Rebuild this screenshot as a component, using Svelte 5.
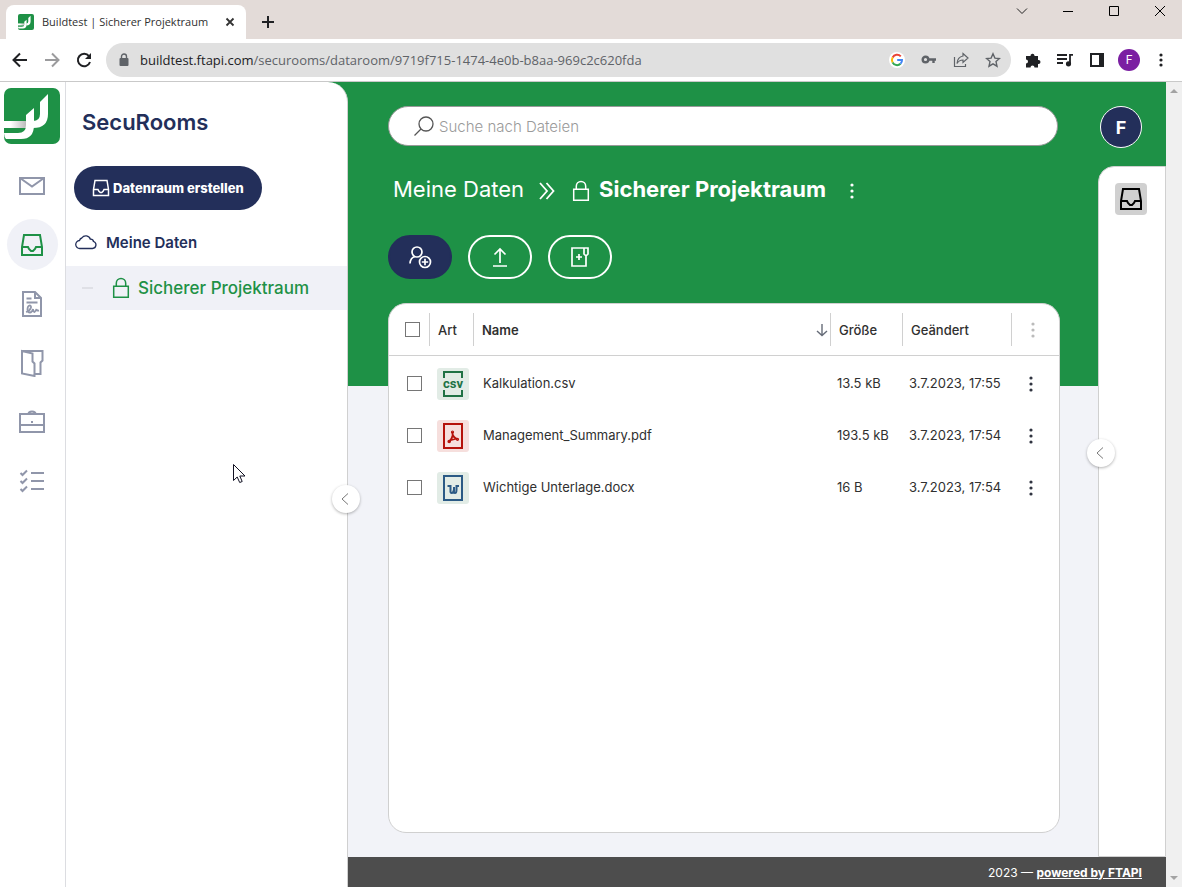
<script lang="ts">
	interface FileRow {
		name: string;
		type: 'csv' | 'pdf' | 'docx';
		size: string;
		changed: string;
	}

	const files: FileRow[] = [
		{ name: 'Kalkulation.csv', type: 'csv', size: '13.5 kB', changed: '3.7.2023, 17:55' },
		{ name: 'Management_Summary.pdf', type: 'pdf', size: '193.5 kB', changed: '3.7.2023, 17:54' },
		{ name: 'Wichtige Unterlage.docx', type: 'docx', size: '16 B', changed: '3.7.2023, 17:54' }
	];

	let search = $state('');
	let selected: string[] = $state([]);
	let allSelected = $derived(selected.length === files.length);

	function toggleAll() {
		selected = allSelected ? [] : files.map((f) => f.name);
	}
</script>

{#snippet tray(size: number)}
	<svg width={size} height={size} viewBox="0 0 24 24" fill="none" stroke="currentColor" stroke-width="2">
		<path d="M4 2h16l2 12v8H2v-8z" />
		<path d="M2 14h6l1 2 2 2h2l2-2 1-2h6" />
	</svg>
{/snippet}

{#snippet lock(size: number)}
	<svg width={size} height={size} viewBox="0 0 22 22" fill="none" stroke="currentColor" stroke-width="1.5">
		<path d="M3.700 9.200h14.600v11.100H3.700z" />
		<path d="M6.300 9V6.200a4.700 4.700 0 0 1 9.400 0V9" />
	</svg>
{/snippet}

{#snippet dots()}
	<svg width="6" height="18" viewBox="0 0 6 18" fill="currentColor">
		<circle cx="3" cy="3" r="1.600" />
		<circle cx="3" cy="9" r="1.600" />
		<circle cx="3" cy="15" r="1.600" />
	</svg>
{/snippet}

{#snippet chevron()}
	<svg width="12" height="12" viewBox="0 0 12 12" fill="none" stroke="currentColor">
		<path d="M9 .5L3 6l6 5.500" />
	</svg>
{/snippet}

{#snippet logo(size: number)}
	<svg width={size} height={size} viewBox="0 0 56 56">
		<defs>
			<linearGradient id="fold">
				<stop offset="0.3" stop-color="#fff" />
				<stop offset="1" stop-color="#bbb" />
			</linearGradient>
		</defs>
		<rect width="56" height="56" rx="7" fill="#1e9146" />
		<path d="M0 33h22v7H0z" fill="url(#fold)" />
		<path d="M29 33q7 0 7-7V14l8-8v20q0 14-15 14z" fill="#fff" />
		<path d="M0 45h14q8 0 8-8V27l8-7v17q0 14-13 14H2q-2-2-2-6z" fill="#fff" />
	</svg>
{/snippet}

<div class="window">
	<header class="tabstrip">
		<div class="tab">
			{@render logo(16)}
			<span class="tab-title">Buildtest | Sicherer Projektraum</span>
			<button class="plain" aria-label="Tab schließen">
				<svg width="10" height="10" viewBox="0 0 10 10" stroke="#333" stroke-width="1.800">
					<path d="M1.500 1.500l7 7M8.500 1.500l-7 7" />
				</svg>
			</button>
		</div>
		<button class="plain new-tab" aria-label="Neuer Tab">
			<svg width="12" height="12" viewBox="0 0 12 12" stroke="#202124" stroke-width="2">
				<path d="M6 0v12M0 6h12" />
			</svg>
		</button>
		<div class="window-buttons">
			<button class="plain" aria-label="Tabs durchsuchen">
				<svg width="12" height="12" viewBox="0 0 12 12" fill="none" stroke="#222"><path d="M1 3.500l5 5 5-5" /></svg>
			</button>
			<button class="plain" aria-label="Minimieren">
				<svg width="12" height="12" viewBox="0 0 12 12" stroke="#000"><path d="M1 6.500h10" /></svg>
			</button>
			<button class="plain" aria-label="Maximieren">
				<svg width="12" height="12" viewBox="0 0 12 12" fill="none" stroke="#000"><path d="M1.500 1.500h9v9h-9z" /></svg>
			</button>
			<button class="plain" aria-label="Schließen">
				<svg width="12" height="12" viewBox="0 0 12 12" stroke="#000"><path d="M1 1l10 10M11 1L1 11" /></svg>
			</button>
		</div>
	</header>

	<div class="toolbar">
		<button class="plain" aria-label="Zurück">
			<svg width="16" height="16" viewBox="0 0 16 16" fill="none" stroke="#202124" stroke-width="2"><path d="M15 8H2M8 1.500L1.500 8 8 14.500" /></svg>
		</button>
		<button class="plain" aria-label="Vor">
			<svg width="16" height="16" viewBox="0 0 16 16" fill="none" stroke="#9b9b9d" stroke-width="2"><path d="M1 8h13M8 1.500L14.500 8 8 14.500" /></svg>
		</button>
		<button class="plain" aria-label="Neu laden">
			<svg width="16" height="16" viewBox="0 0 16 16" fill="none" stroke="#202124" stroke-width="2">
				<path d="M13 4.200A6.200 6.200 0 1 0 14 10" />
				<path d="M15 1v6H9z" fill="#202124" stroke="none" />
			</svg>
		</button>
		<div class="omnibox">
			<svg width="10" height="14" viewBox="0 0 10 14">
				<rect x="0.500" y="5" width="9" height="8" rx="1" fill="#5f6368" />
				<path d="M2.500 5.500V3.500a2.500 2.500 0 0 1 5 0v2" fill="none" stroke="#5f6368" stroke-width="1.400" />
			</svg>
			<div class="url"><span>buildtest.ftapi.com</span>/securooms/dataroom/9719f715-1474-4e0b-b8aa-969c2c620fda</div>
			<svg width="16" height="16" viewBox="0 0 16 16" fill="none" stroke-width="2">
				<circle cx="8" cy="8" r="8" fill="#fff" />
				<path d="M3.600 5.500A5 5 0 0 1 11.800 4.300" stroke="#ea4335" />
				<path d="M3.600 5.500a5 5 0 0 0 0 5" stroke="#fbbc05" />
				<path d="M3.600 10.500a5 5 0 0 0 7.900 1.200" stroke="#34a853" />
				<path d="M11.500 11.700Q13.100 10.200 13 8.100H8.200" stroke="#4285f4" />
			</svg>
			<svg width="16" height="16" viewBox="0 0 16 16" fill="none" stroke="#5f6368" stroke-width="2.400">
				<circle cx="4.500" cy="7.500" r="2.800" />
				<path d="M7.500 7.500H15M12.500 7.500V11" />
			</svg>
			<svg width="16" height="16" viewBox="0 0 16 16" fill="none" stroke="#5f6368" stroke-width="1.200">
				<path d="M1.500 5v9.500h11V12" />
				<path d="M10 1.500L15 6l-5 4.500V8Q6 8 4 11.500 4.500 5 10 4z" />
			</svg>
			<svg width="16" height="16" viewBox="0 0 16 16" fill="none" stroke="#5f6368" stroke-width="1.400">
				<path d="M8 1.800l1.900 4.300 4.600.4-3.500 3.100 1 4.600-4-2.400-4 2.400 1-4.600-3.500-3.100 4.600-.4z" />
			</svg>
		</div>
		<div class="extensions">
			<svg width="16" height="16" viewBox="0 0 16 16" fill="#202124">
				<path d="M1 4h4.500a2 2 0 0 1 4-.5V4H13v4h.5a2 2 0 0 1 0 4H13v3.500H9.500a2 2 0 0 0-4 0H1v-4a2 2 0 0 0 0-4z" />
			</svg>
			<svg width="16" height="16" viewBox="0 0 16 16" fill="none" stroke="#202124" stroke-width="1.800">
				<path d="M0 3h10M0 7h10M0 11h6M13 12V2.900h3" />
				<circle cx="11.500" cy="11.800" r="1.700" fill="#202124" />
			</svg>
			<svg width="14" height="14" viewBox="0 0 14 14" fill="none" stroke="#202124" stroke-width="2">
				<path d="M1 1h12v12H1z" />
				<path d="M10 1h3v12h-3z" fill="#202124" />
			</svg>
			<span class="profile">F</span>
			<svg width="4" height="14" viewBox="0 0 4 14" fill="#202124">
				<circle cx="2" cy="2" r="1.600" /><circle cx="2" cy="7" r="1.600" /><circle cx="2" cy="12" r="1.600" />
			</svg>
		</div>
	</div>

	<div class="page">
		<nav class="rail">
			<a class="brand" href="#start" aria-label="FTAPI">{@render logo(56)}</a>
			<a class="rail-item" href="#mails" aria-label="SecuMails">
				<svg width="28" height="28" viewBox="0 0 28 28" fill="none" stroke="currentColor" stroke-width="2">
					<path d="M2 6h24v16H2z" /><path d="M2 6l12 8.500L26 6" />
				</svg>
			</a>
			<a class="rail-item active" href="#rooms" aria-label="SecuRooms">{@render tray(24)}</a>
			<a class="rail-item" href="#forms" aria-label="SecuForms">
				<svg width="28" height="28" viewBox="0 0 28 28" fill="none" stroke="currentColor" stroke-width="2">
					<path d="M17 2H5v24h18V8z" /><path d="M17 2v6h6" />
					<path d="M8.500 8.500h5M8.500 12.500h11" stroke-width="1.800" />
					<path d="M8 22q4-1 5-4.500.2-2-1.500-2-2 .5-2 4 0 3 2.500 3 2 0 3-3.500.2 3 1.500 3 1.500-1 2-3 .2 2 2.500 1.500" stroke-width="1.800" />
				</svg>
			</a>
			<a class="rail-item" href="#folders" aria-label="Ordner">
				<svg width="28" height="28" viewBox="0 0 28 28" fill="none" stroke="currentColor" stroke-width="2">
					<path d="M4 2h20.500v9.500l-2 2V25H17" />
					<path d="M4 2v22.500L16.500 27V14.500l-2-2V4.500z" />
				</svg>
			</a>
			<a class="rail-item" href="#cases" aria-label="Vorgänge">
				<svg width="28" height="28" viewBox="0 0 28 28" fill="none" stroke="currentColor" stroke-width="2">
					<path d="M2 6h24v18H2zM2 17h24" /><path d="M10.500 6q0-2.500 3.500-2.500t3.500 2.500" />
					<path d="M13 14h2" />
				</svg>
			</a>
			<a class="rail-item" href="#tasks" aria-label="Aufgaben">
				<svg width="28" height="28" viewBox="0 0 28 28" fill="none" stroke="currentColor" stroke-width="2">
					<path d="M13 6h13M13 14h13M13 22h13" />
					<path d="M2.500 6l2 2L9 3.500M2.500 14l2 2L9 11.500M2.500 22l2 2L9 19.500" />
				</svg>
			</a>
		</nav>

		<div class="workspace">
			<aside class="sidebar">
				<h1>SecuRooms</h1>
				<button class="create">{@render tray(18)}Datenraum erstellen</button>
				<a class="tree-root" href="#daten">
					<svg width="22" height="16" viewBox="0 0 22 16" fill="none" stroke="currentColor" stroke-width="1.300">
						<path d="M5 14.500a4 4 0 0 1-.5-8Q5 4.500 6.800 4a4.800 4.800 0 0 1 8.600 1.200Q18 5 18.500 7.500a3.600 3.600 0 0 1-1 7z" />
					</svg>
					Meine Daten
				</a>
				<a class="tree-item" href="#projekt">
					<span class="dash"></span>
					{@render lock(22)}
					Sicherer Projektraum
				</a>
				<button class="collapse collapse-left" aria-label="Seitenleiste einklappen">{@render chevron()}</button>
			</aside>

			<div class="main">
				<div class="columns">
					<section class="content">
						<label class="search">
							<svg width="20" height="20" viewBox="0 0 20 20" fill="none" stroke="#555" stroke-width="1.300">
								<circle cx="12" cy="8" r="7" /><path d="M7 13l-6.500 6.500" />
							</svg>
							<input type="text" placeholder="Suche nach Dateien" aria-label="Suche nach Dateien" bind:value={search} />
						</label>

						<div class="breadcrumb">
							<a href="#daten">Meine Daten</a>
							<svg width="16" height="18" viewBox="0 0 16 18" fill="none" stroke="currentColor" stroke-width="1.800">
								<path d="M1 1l7 8-7 8M7.500 1l7 8-7 8" />
							</svg>
							{@render lock(22)}
							<h2>Sicherer Projektraum</h2>
							<button class="plain" aria-label="Weitere Aktionen">{@render dots()}</button>
						</div>

						<div class="actions">
							<button class="pill filled" aria-label="Mitglied hinzufügen">
								<svg width="24" height="24" viewBox="0 0 24 24" fill="none" stroke="currentColor" stroke-width="1.700">
									<circle cx="9" cy="7" r="5" />
									<path d="M2 18.500Q2.500 12.500 7 11.500" />
									<circle cx="17" cy="17" r="5.500" /><path d="M17 13.800v6.400M13.800 17h6.400" />
								</svg>
							</button>
							<button class="pill" aria-label="Hochladen">
								<svg width="20" height="20" viewBox="0 0 20 20" fill="none" stroke="currentColor" stroke-width="1.700">
									<path d="M10 16V2M4.500 7.500L10 2l5.500 5.500M3 19h14" />
								</svg>
							</button>
							<button class="pill" aria-label="Ordner anlegen">
								<svg width="20" height="20" viewBox="0 0 20 20" fill="none" stroke="currentColor" stroke-width="1.700">
									<path d="M14 1H2v18h14V9l-2-2zM14 1h4v6l-2 2" /><path d="M9 7v6M6 10h6" />
								</svg>
							</button>
						</div>

						<div class="card">
							<table>
								<colgroup>
									<col class="c-check" /><col class="c-type" /><col /><col class="c-size" /><col class="c-date" /><col class="c-menu" />
								</colgroup>
								<thead>
									<tr>
										<th><div class="head check"><input type="checkbox" aria-label="Alle auswählen" checked={allSelected} onchange={toggleAll} /></div></th>
										<th><div class="head">Art</div></th>
										<th>
											<div class="head sorted">
												Name
												<svg width="12" height="14" viewBox="0 0 12 14" fill="none" stroke="#666c78" stroke-width="1.400"><path d="M6 1v11.500M1 8l5 4.500L11 8" /></svg>
											</div>
										</th>
										<th><div class="head">Größe</div></th>
										<th><div class="head">Geändert</div></th>
										<th><div class="head last">{@render dots()}</div></th>
									</tr>
								</thead>
								<tbody>
									{#each files as file (file.name)}
										<tr>
											<td class="pick"><input type="checkbox" value={file.name} bind:group={selected} aria-label={file.name} /></td>
											<td class="kind">
												<span class="file-icon {file.type}">
													<svg width="32" height="32" viewBox="0 0 32 32" fill="none" stroke="currentColor" stroke-width="2">
														{#if file.type === 'csv'}
															<path d="M7 10V4h18v6M7 22v6h18v-6" />
															<text x="16" y="20" text-anchor="middle">csv</text>
														{:else if file.type === 'pdf'}
															<path d="M7 4h18v24H7z" />
															<path d="M15.500 12v2Q16 17 20.500 19.500M15.800 15Q15 19 12 22M12.500 20.500L20 18.500" stroke-width="1.800" />
															<circle cx="15.500" cy="12" r=".6" /><circle cx="12.200" cy="21.500" r=".8" /><circle cx="20.500" cy="19.300" r=".6" />
														{:else}
															<path d="M7 4h18v24H7z" />
															<path d="M10.500 14h3v4.500q-.3 2.500 1.200 2.500 1.800 0 2.300-3.500V15v3.500q-.3 2.500 1 2.500 1.500 0 1.500-3.500V14H22" stroke-width="2" />
														{/if}
													</svg>
												</span>
											</td>
											<td class="name">{file.name}</td>
											<td class="meta">{file.size}</td>
											<td class="meta">{file.changed}</td>
											<td class="menu"><button class="plain" aria-label="Aktionen für {file.name}">{@render dots()}</button></td>
										</tr>
									{/each}
								</tbody>
							</table>
						</div>
					</section>

					<div class="side">
						<button class="avatar" aria-label="Profil">F</button>
						<aside class="panel">
							<button class="panel-tab" aria-label="Datenraum-Details">{@render tray(24)}</button>
							<button class="collapse collapse-right" aria-label="Details ausklappen">{@render chevron()}</button>
						</aside>
					</div>
				</div>
				<footer>2023 — <a href="#ftapi">powered by FTAPI</a></footer>
			</div>
		</div>

		<div class="scrollbar">
			<svg width="8" height="4" viewBox="0 0 8 4" fill="#a3a3a3"><path d="M0 4l4-4 4 4z" /></svg>
			<svg width="8" height="4" viewBox="0 0 8 4" fill="#a3a3a3"><path d="M0 0l4 4 4-4z" /></svg>
		</div>
	</div>

	<svg class="cursor" width="13" height="20" viewBox="0 0 13 20" fill="#fff" stroke="#111122">
		<path d="M.5.5v16l3.700-3.500 2.500 5.500 2.500-1-2.400-5.500h5.200z" />
	</svg>
</div>

<style>
	:global(body) {
		margin: 0;
	}

	.window {
		--green: #1e9146;
		--navy: #232f5a;
		--line: #d0d0d0;
		display: flex;
		flex-direction: column;
		position: relative;
		height: 100vh;
		overflow: hidden;
		background: #fff;
		font-family: Inter, 'Liberation Sans', sans-serif;
		color: #303030;
	}

	.window :global(*) {
		box-sizing: border-box;
	}

	svg {
		display: block;
		flex: none;
	}

	button {
		font-family: inherit;
		cursor: pointer;
	}

	a {
		color: inherit;
		text-decoration: none;
	}

	.plain {
		display: flex;
		padding: 0;
		border: 0;
		background: none;
		color: inherit;
	}

	/* browser frame */
	.tabstrip {
		display: flex;
		align-items: flex-end;
		flex: none;
		height: 39px;
		padding-left: 6px;
		background: #e3dbd8;
	}

	.tab {
		display: flex;
		align-items: center;
		gap: 8px;
		width: 240px;
		height: 34px;
		padding: 0 11px 0 12px;
		border-radius: 8px 8px 0 0;
		background: #fff;
	}

	.tab-title {
		flex: 1;
		font: 11px/16px 'Open Sans', sans-serif;
		white-space: nowrap;
	}

	.new-tab {
		margin: 0 0 11px 16px;
	}

	.window-buttons {
		display: flex;
		align-self: flex-start;
		gap: 34px;
		margin-left: auto;
		padding: 5px 16px 0 0;
	}

	.toolbar {
		display: flex;
		align-items: center;
		flex: none;
		gap: 16px;
		height: 43px;
		padding: 0 5px 0 12px;
		border-bottom: 1px solid #c9c9c9;
	}

	.omnibox {
		display: flex;
		align-items: center;
		flex: 1;
		gap: 16px;
		height: 34px;
		margin: 0 -10px 0 -2px;
		padding: 0 10px 0 13px;
		border-radius: 17px;
		background: #e0e0e0;
	}

	.url {
		flex: 1;
		margin-left: -5px;
		font: 13px/20px 'Open Sans', sans-serif;
		color: #5f6368;
		white-space: nowrap;
	}

	.url span {
		color: #202124;
	}

	.extensions {
		display: grid;
		grid-template-columns: repeat(5, 32px);
		place-items: center;
	}

	.profile {
		width: 22px;
		border-radius: 50%;
		background: #7b1fa2;
		color: #fff;
		font: 12px/22px Roboto, sans-serif;
		text-align: center;
	}

	.page {
		display: flex;
		flex: 1;
		min-height: 0;
	}

	/* module rail */
	.rail {
		display: flex;
		flex-direction: column;
		align-items: center;
		flex: none;
		gap: 8px;
		width: 66px;
		padding: 6px 1px 0 0;
		border-right: 1px solid #dcdde1;
		color: #9096aa;
	}

	.brand {
		margin-bottom: 8px;
	}

	.rail-item {
		display: grid;
		place-items: center;
		width: 51px;
		height: 51px;
		border-radius: 50%;
	}

	.rail-item.active {
		background: #f0f1f7;
		color: var(--green);
	}

	.workspace {
		display: flex;
		flex: 1;
		min-width: 0;
		background: linear-gradient(var(--green) 304px, #f2f3f8 304px);
	}

	.sidebar {
		position: relative;
		flex: none;
		width: 282px;
		border-right: 1px solid var(--line);
		border-top-right-radius: 20px;
		background: #fff;
		color: var(--navy);
	}

	h1 {
		margin: 0;
		padding: 24px 16px 28px;
		font-size: 22px;
		line-height: 32px;
		font-weight: 600;
	}

	.create {
		display: flex;
		align-items: center;
		gap: 3px;
		height: 44px;
		margin-left: 8px;
		padding: 0 18px;
		border: 0;
		border-radius: 22px;
		background: var(--navy);
		color: #fff;
		font-size: 13px;
		font-weight: 800;
	}

	.tree-root {
		display: flex;
		align-items: center;
		gap: 9px;
		height: 44px;
		margin: 10px 0 2px;
		padding-left: 9px;
		font-size: 15px;
		font-weight: 600;
	}

	.tree-item {
		display: flex;
		align-items: center;
		gap: 6px;
		height: 44px;
		padding-left: 16px;
		background: #f0f1f7;
		color: var(--green);
		font-size: 17px;
		font-weight: 500;
	}

	.dash {
		width: 11px;
		height: 2px;
		margin-right: 11px;
		background: #dfe0e6;
	}

	.collapse {
		position: absolute;
		display: grid;
		place-items: center;
		width: 28px;
		height: 28px;
		padding: 0 2px 0 0;
		border: 0;
		border-radius: 50%;
		background: #fff;
		box-shadow: 0 1px 3px rgba(0, 0, 0, 0.3);
		color: #777;
	}

	.collapse-left {
		top: 50%;
		right: -13px;
	}

	.collapse-right {
		top: 272px;
		left: -12px;
	}

	.main {
		display: flex;
		flex-direction: column;
		flex: 1;
		min-width: 0;
	}

	.columns {
		display: flex;
		flex: 1;
		min-height: 0;
	}

	.content {
		display: flex;
		flex-direction: column;
		flex: 1;
		gap: 24px;
		min-width: 0;
		padding: 24px 38px 24px 40px;
	}

	.search {
		display: flex;
		align-items: center;
		gap: 5px;
		height: 40px;
		margin-right: 2px;
		padding: 0 25px;
		border: 1px solid #999;
		border-radius: 20px;
		background: #fff;
	}

	.search input {
		flex: 1;
		padding: 2px 0 0;
		border: 0;
		outline: 0;
		background: none;
		font: 15px/20px Inter, sans-serif;
		font-weight: 300;
	}

	.search input::placeholder {
		color: #9a9a9a;
	}

	.breadcrumb {
		display: flex;
		align-items: center;
		gap: 7px;
		height: 41px;
		padding-left: 5px;
		color: #fff;
		font-size: 22px;
		white-space: nowrap;
	}

	.breadcrumb svg {
		margin-left: 8px;
	}

	.breadcrumb a,
	h2 {
		padding-bottom: 4px;
	}

	h2 {
		margin: 0 8px 0 0;
		font-size: 22px;
		font-weight: 700;
	}

	.actions {
		display: flex;
		gap: 16px;
	}

	.pill {
		display: grid;
		place-items: center;
		width: 64px;
		height: 44px;
		padding: 0;
		border: 2px solid #fff;
		border-radius: 22px;
		background: none;
		color: #fff;
	}

	.pill.filled {
		border-color: var(--navy);
		background: var(--navy);
	}

	.card {
		flex: 1;
		min-height: 0;
		border: 1px solid var(--line);
		border-radius: 18px;
		background: #fff;
	}

	table {
		width: 100%;
		table-layout: fixed;
		border-collapse: separate;
		border-spacing: 0;
		font-size: 13px;
		line-height: 20px;
	}

	.c-check {
		width: 41px;
	}

	.c-type {
		width: 44px;
	}

	.c-size {
		width: 72px;
	}

	.c-date {
		width: 109px;
	}

	.c-menu {
		width: 47px;
	}

	th {
		height: 52px;
		padding: 0;
		border-bottom: 1px solid var(--line);
		font-weight: 500;
		text-align: left;
	}

	.head {
		display: flex;
		align-items: center;
		height: 33px;
		padding-left: 8px;
		border-right: 1px solid var(--line);
	}

	.head.check {
		padding-left: 16px;
	}

	.head.sorted {
		justify-content: space-between;
		padding-right: 2px;
		font-weight: 600;
	}

	.head.last {
		padding-left: 18px;
		border: 0;
		color: #bbb;
	}

	td {
		height: 52px;
		padding: 0 0 2px;
	}

	tbody::before {
		content: '';
		display: block;
		height: 2px;
	}

	input[type='checkbox'] {
		display: block;
		appearance: none;
		width: 15px;
		height: 15px;
		margin: 0;
		border: 1px solid #767676;
		background: #fff;
	}

	input[type='checkbox']:checked {
		background: var(--green);
	}

	.pick {
		padding-left: 18px;
	}

	.kind {
		padding: 0 0 0 7px;
	}

	.file-icon {
		display: block;
		width: 32px;
		height: 32px;
		border-radius: 3px;
		background: #e2ece6;
	}

	.file-icon text {
		fill: currentColor;
		stroke: none;
		font: 700 13px Roboto, sans-serif;
	}

	.file-icon.csv {
		color: #207245;
	}

	.file-icon.pdf {
		background: #f6dfdd;
		color: #b5120b;
	}

	.file-icon.docx {
		color: #2b5a85;
	}

	.name {
		padding-left: 9px;
	}

	.meta {
		padding-left: 6px;
	}

	.menu {
		padding: 0 0 0 16px;
		color: #303440;
	}

	.side {
		display: flex;
		flex-direction: column;
		flex: none;
		gap: 18px;
		width: 68px;
		padding-top: 24px;
	}

	.avatar {
		align-self: flex-end;
		width: 42px;
		height: 42px;
		margin-right: 24px;
		padding: 0;
		border: 1px solid #fff;
		border-radius: 50%;
		background: var(--navy);
		color: #fff;
		font-size: 18px;
		font-weight: 700;
	}

	.panel {
		position: relative;
		flex: 1;
		padding: 16px;
		border: 1px solid var(--line);
		border-top-left-radius: 16px;
		background: #fff;
	}

	.panel-tab {
		display: grid;
		place-items: center;
		width: 32px;
		height: 32px;
		padding: 0;
		border: 0;
		border-radius: 4px;
		background: #d0d0d0;
		color: #000;
	}

	footer {
		flex: none;
		height: 30px;
		padding-right: 24px;
		background: #4d4d4d;
		color: #fff;
		font-size: 12px;
		line-height: 31px;
		text-align: right;
	}

	footer a {
		font-weight: 700;
		text-decoration: underline;
	}

	.scrollbar {
		display: flex;
		flex-direction: column;
		align-items: center;
		justify-content: space-between;
		flex: none;
		width: 16px;
		padding: 7px 0;
		background: #f0f0f0;
	}

	.cursor {
		position: absolute;
		top: 464px;
		left: 233px;
		pointer-events: none;
	}
</style>
